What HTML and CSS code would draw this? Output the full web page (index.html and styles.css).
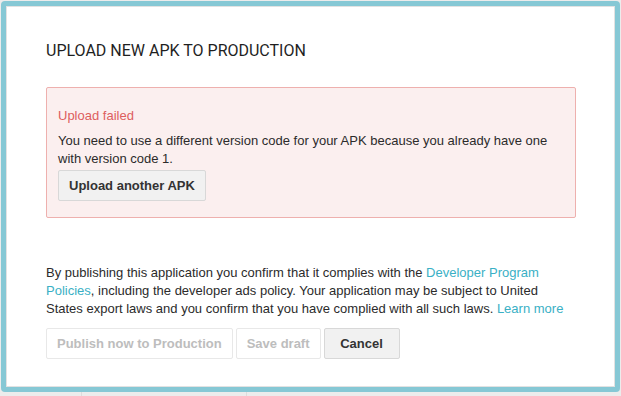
FILE: index.html
```html
<!DOCTYPE html>
<html lang="en">
  <head>
    <meta charset="UTF-8" />
    <meta name="viewport" content="width=device-width, initial-scale=1.0" />
    <title>Upload new APK to production</title>
    <link rel="stylesheet" href="styles.css">
  </head>

  <body>
    <div class="dialog">
      <h1 class="dialog_title">UPLOAD NEW APK TO PRODUCTION</h1>

      <div class="alert_error" role="alert">
        <div class="alert_error_title">Upload failed</div>
        <p>
          You need to use a different version code for your APK because you
          already have one with version code 1.
        </p>
        <button class="button" type="button">Upload another APK</button>
      </div>

      <p class="terms">
        By publishing this application you confirm that it complies with the
        <a href="#">Developer Program Policies</a>, including the developer ads
        policy. Your application may be subject to United States export laws
        and you confirm that you have complied with all such laws.
        <a href="#">Learn more</a>
      </p>

      <div class="actions">
        <button class="button --disabled" type="button" disabled>Publish now to Production</button>
        <button class="button --disabled" type="button" disabled>Save draft</button>
        <button class="button --cancel" type="button">Cancel</button>
      </div>
    </div>

    <div class="behind">
      <span class="behind_button">Start or check progress</span>
    </div>
  </body>
</html>
```

FILE: styles.css
```css
* {
  box-sizing: border-box;
  margin: 0px;
  padding: 0px;
}

body {
  background-color: #ececec;
  color: #2b2b2b;
  font-family: "Liberation Sans", Arial, sans-serif;
  font-size: 13px;
  line-height: 18px;
  overflow: hidden;
  height: 396px;
}

.dialog {
  background-color: #fff;
  border: 5px solid #86c8d5;
  border-radius: 4px;
  box-shadow: inset 0 0 0 1px #e2e2e2;
  height: 391px;
  margin: 1px 1px 0 1px;
  padding: 33px 39px 0 40px;
  position: relative;
  z-index: 1;
}

.dialog_title {
  color: #1f1f1f;
  font-family: Roboto, "Liberation Sans", sans-serif;
  font-size: 16px;
  font-weight: 400;
  line-height: 24px;
  margin-bottom: 24px;
}

.alert_error {
  background-color: #fbefef;
  border: 1px solid #eeb0ae;
  border-radius: 2px;
  height: 131px;
  padding: 19px 11px 0 11px;
}

.alert_error_title {
  color: #dd5e5e;
  margin-bottom: 7px;
}

.alert_error p {
  margin-bottom: 2px;
}

.button {
  background-color: #f1f1f1;
  border: 1px solid #d8d8d8;
  border-radius: 2px;
  color: #333;
  cursor: pointer;
  font-family: "Liberation Sans", Arial, sans-serif;
  font-size: 13px;
  font-weight: bold;
  height: 31px;
  padding: 0 10px;
}

.button.--disabled {
  background-color: #fff;
  border-color: #e8e8e8;
  color: #bdbdbd;
  cursor: default;
}

.button.--cancel {
  min-width: 76px;
}

.terms {
  margin-top: 46px;
}

.terms a {
  color: #3ab0c5;
  text-decoration: none;
}

.actions {
  display: flex;
  gap: 3px;
  margin-top: 10px;
}

.behind {
  padding-left: 81px;
  margin-top: -2px;
}

.behind_button {
  border: 1px solid #dcdcdc;
  color: #a8a8a8;
  display: inline-block;
  font-weight: bold;
  padding: 2px 9px;
}
```
